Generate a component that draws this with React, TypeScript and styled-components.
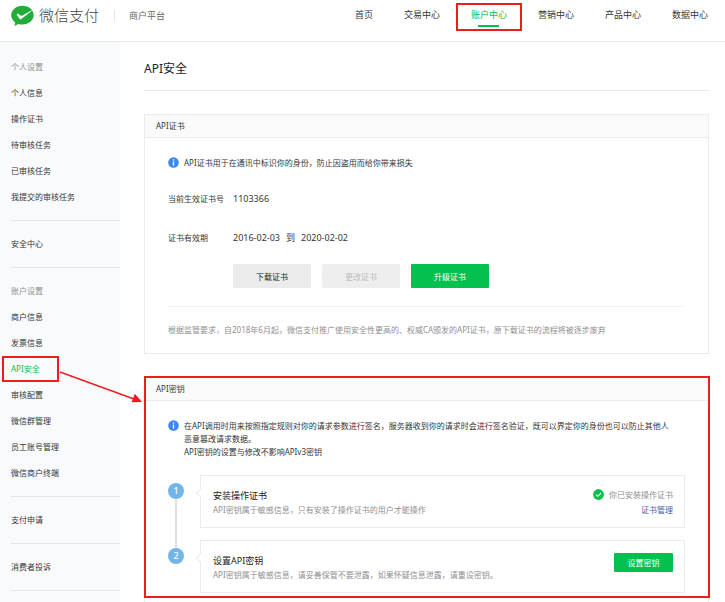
import React from 'react';
import styled, { createGlobalStyle, css } from 'styled-components';

const GlobalStyle = createGlobalStyle`
  *, *::before, *::after { box-sizing: border-box; }
  body {
    margin: 0;
    background: #fff;
    color: #353535;
    font-family: 'Noto Sans', 'Noto Sans CJK SC', sans-serif;
    font-size: 8px;
    line-height: 13px;
  }
  h1, h2, h3, p, ul, ol, dl, dd { margin: 0; padding: 0; font-weight: 400; }
  ul, ol { list-style: none; }
  a { color: inherit; text-decoration: none; }
  button { font: inherit; }
`;

const GREEN = '#04c04f';
const RED = '#ee1c1f';
const LINE = '#ebebeb';

const Page = styled.div`
  display: flex;
  flex-direction: column;
  min-height: 100vh;
`;

const Header = styled.header`
  display: flex;
  align-items: flex-start;
  height: 42px;
  padding: 0 16px 0 11px;
  border-bottom: 1px solid #e7e7eb;
`;

const Brand = styled.a`
  display: flex;
  align-items: center;
  gap: 5px;
  height: 31px;
  color: #444;
  font-size: 15px;
  font-weight: 300;
`;

const Platform = styled.span`
  height: 11px;
  margin: 10px 0 0 15px;
  padding-left: 14px;
  border-left: 1px solid #e4e4e4;
  color: #666;
  font-size: 9px;
  line-height: 11px;
`;

const Nav = styled.nav`
  display: flex;
  gap: 5px;
  margin-left: auto;
  margin-right: -12px;
  padding-top: 3px;
`;

const NavLink = styled.a<{ $active?: boolean }>`
  display: flex;
  flex-direction: column;
  align-items: center;
  height: 28px;
  padding: 3px 11px 0;
  border: 2px solid transparent;
  font-size: 9px;
  line-height: 13px;
  white-space: nowrap;
  ${({ $active }) =>
    $active &&
    css`
      margin: 0 -2px;
      padding: 3px 13px 0;
      border-color: ${RED};
      color: ${GREEN};
      &::after {
        content: '';
        width: 21px;
        height: 2px;
        margin-top: 4px;
        background: ${GREEN};
      }
    `}
`;

const Body = styled.div`
  display: flex;
  flex: 1;
`;

const Sidebar = styled.nav`
  flex: 0 0 120px;
  padding: 2px 0 0 11px;
  background: #f9fafc;
`;

const Group = styled.ul`
  padding: 10px 0;
  border-bottom: 1px solid #e4e6ea;
`;

const GroupTitle = styled.li`
  color: #8f8f8f;
  line-height: 26px;
`;

const SideItem = styled.li`
  position: relative;
  height: 26px;
  line-height: 26px;
`;

const CurrentLink = styled.a`
  color: ${GREEN};
  &::before {
    content: '';
    position: absolute;
    top: 0;
    left: -9px;
    width: 57px;
    height: 26px;
    border: 2px solid ${RED};
  }
`;

const Arrow = styled.svg`
  position: absolute;
  top: 14px;
  left: 48px;
  z-index: 1;
  pointer-events: none;
`;

const Main = styled.main`
  display: flex;
  flex: 1;
  flex-direction: column;
  gap: 23px;
  min-width: 0;
  padding: 0 16px 0 24px;
`;

const PageTitle = styled.h1`
  padding: 18px 0 12px;
  border-bottom: 1px solid ${LINE};
  color: #222;
  font-size: 12px;
  line-height: 18px;
`;

const Card = styled.section<{ $open?: boolean }>`
  position: relative;
  border: 1px solid ${LINE};
  ${({ $open }) => $open && 'flex: 1; border-bottom: 0;'}
`;

const CardTitle = styled.h2`
  padding: 0 11px;
  border-bottom: 1px solid ${LINE};
  background: #fafafa;
  font-size: 8px;
  line-height: 22px;
`;

const CardBody = styled.div<{ $bottom: number }>`
  padding: 18px 23px ${({ $bottom }) => $bottom}px;
`;

const Highlight = styled.div`
  position: absolute;
  inset: -2px -2px 4px -1px;
  border: 2px solid ${RED};
  pointer-events: none;
`;

const Notice = styled.div`
  display: flex;
  align-items: flex-start;
  gap: 5px;
  svg { flex: none; margin-top: 1px; }
`;

const Fields = styled.dl`
  display: grid;
  grid-template-columns: 65px 1fr;
  row-gap: 26px;
  margin: 23px 0 20px;
  dd { display: flex; gap: 6px; font-size: 9px; }
`;

const Actions = styled.div`
  display: flex;
  gap: 11px;
  padding-left: 65px;
`;

const Button = styled.button<{ $primary?: boolean; $small?: boolean }>`
  width: ${({ $small }) => ($small ? 59 : 78)}px;
  height: ${({ $small }) => ($small ? 19 : 24)}px;
  padding: 0;
  border: 0;
  border-radius: 1px;
  background: ${({ $primary }) => ($primary ? GREEN : '#ececec')};
  color: ${({ $primary }) => ($primary ? '#fff' : '#222')};
  cursor: pointer;
  &:disabled { color: #bcbcbc; background: #eee; cursor: default; }
`;

const Footnote = styled.p`
  margin-top: 18px;
  padding-top: 16px;
  border-top: 1px solid #f2f2f2;
  color: #8f8f8f;
`;

const Steps = styled.ol`
  display: flex;
  flex-direction: column;
  gap: 12px;
  margin-top: 17px;
`;

const Step = styled.li`
  display: flex;
  gap: 16px;
`;

const Marker = styled.div`
  display: flex;
  flex-direction: column;
  align-items: center;
  width: 16px;
  padding-top: 8px;
  ${Step}:not(:last-child) &::after {
    content: '';
    flex: 1;
    width: 2px;
    margin-bottom: -20px;
    background: #e0e0e8;
  }
`;

const Dot = styled.span`
  width: 16px;
  height: 16px;
  border-radius: 50%;
  background: #72b5e6;
  color: #fff;
  font-size: 9px;
  font-weight: 500;
  line-height: 16px;
  text-align: center;
`;

const StepBox = styled.div`
  position: relative;
  display: flex;
  flex: 1;
  justify-content: space-between;
  height: 53px;
  padding: 12px 11px 0 12px;
  border: 1px solid ${LINE};
  color: #8f8f8f;
  &::before {
    content: '';
    position: absolute;
    top: 14px;
    left: -4px;
    width: 6px;
    height: 6px;
    border: solid ${LINE};
    border-width: 0 0 1px 1px;
    background: #fff;
    transform: rotate(45deg);
  }
`;

const StepTitle = styled.h3`
  color: #222;
  font-size: 9px;
  line-height: 15px;
`;

const Status = styled.div`
  display: flex;
  flex-direction: column;
  align-items: flex-end;
  gap: 2px;
  a { color: #3f5fa8; }
`;

const Installed = styled.span`
  display: flex;
  align-items: center;
  gap: 5px;
`;

const InfoIcon = () => (
  <svg width="11" height="11" viewBox="0 0 11 11" aria-hidden="true">
    <circle cx="5.5" cy="5.5" r="5.3" fill="#3b87f7" />
    <circle cx="5.5" cy="3" r="0.8" fill="#fff" />
    <path d="M5.5 4.6v4" stroke="#fff" strokeWidth="1.3" />
  </svg>
);

const CheckIcon = () => (
  <svg width="11" height="11" viewBox="0 0 11 11" aria-hidden="true">
    <circle cx="5.5" cy="5.5" r="5.4" fill={GREEN} />
    <path d="M3 5.6l1.8 1.7L8.1 4" fill="none" stroke="#fff" strokeWidth="1.1" />
  </svg>
);

const PayLogo = () => (
  <svg width="23" height="22" viewBox="0 0 23 22" aria-hidden="true">
    <path
      d="M11.5.8C5.3.8.2 5 .2 10.2c0 2.900 1.600 5.500 4.100 7.200l-.9 3.600 4-2.100c1.300.4 2.700.6 4.100.6 6.200 0 11.200-4.200 11.200-9.400S17.700.8 11.500.8z"
      fill="#22ac38"
    />
    <path
      d="M5.900 9.200c.4-.6 1-.6 1.600-.2l2.400 1.700c.4.2.8.2 1.200 0l9.200-5.300c.4-.2.7.2.3.6L10.300 14c-.5.4-1.300.3-1.700-.3L6 10.300c-.3-.4-.4-.8-.1-1.100z"
      fill="#fff"
    />
  </svg>
);

const navItems = ['首页', '交易中心', '账户中心', '营销中心', '产品中心', '数据中心'];

const groups: { title?: string; items: string[] }[] = [
  { title: '个人设置', items: ['个人信息', '操作证书', '待审核任务', '已审核任务', '我提交的审核任务'] },
  { items: ['安全中心'] },
  {
    title: '账户设置',
    items: ['商户信息', '发票信息', 'API安全', '审核配置', '微信群管理', '员工账号管理', '微信商户终端'],
  },
  { items: ['支付申请'] },
  { items: ['消费者投诉'] },
];

export default function App() {
  return (
    <Page lang="zh-CN">
      <GlobalStyle />
      <Header>
        <Brand href="#">
          <PayLogo />
          微信支付
        </Brand>
        <Platform>商户平台</Platform>
        <Nav>
          {navItems.map((name) => (
            <NavLink key={name} href="#" $active={name === '账户中心'}>
              {name}
            </NavLink>
          ))}
        </Nav>
      </Header>
      <Body>
        <Sidebar>
          {groups.map((group) => (
            <Group key={group.items[0]}>
              {group.title && <GroupTitle>{group.title}</GroupTitle>}
              {group.items.map((item) => (
                <SideItem key={item}>
                  {item === 'API安全' ? (
                    <>
                      <CurrentLink href="#" aria-current="page">
                        {item}
                      </CurrentLink>
                      <Arrow width="86" height="36" viewBox="0 0 86 36" aria-hidden="true">
                        <path d="M1 2l74 27" stroke={RED} strokeWidth="1.4" />
                        <path d="M83 32l-10.5.3 3.3-8.600z" fill={RED} />
                      </Arrow>
                    </>
                  ) : (
                    <a href="#">{item}</a>
                  )}
                </SideItem>
              ))}
            </Group>
          ))}
        </Sidebar>
        <Main>
          <PageTitle>API安全</PageTitle>
          <Card>
            <CardTitle>API证书</CardTitle>
            <CardBody $bottom={17}>
              <Notice>
                <InfoIcon />
                <p>API证书用于在通讯中标识你的身份，防止因盗用而给你带来损失</p>
              </Notice>
              <Fields>
                <dt>当前生效证书号</dt>
                <dd>1103366</dd>
                <dt>证书有效期</dt>
                <dd>
                  <span>2016-02-03</span>
                  <span>到</span>
                  <span>2020-02-02</span>
                </dd>
              </Fields>
              <Actions>
                <Button type="button">下载证书</Button>
                <Button type="button" disabled>
                  更改证书
                </Button>
                <Button type="button" $primary>
                  升级证书
                </Button>
              </Actions>
              <Footnote>
                根据监管要求，自2018年6月起，微信支付推广使用安全性更高的、权威CA颁发的API证书，原下载证书的流程将被逐步废弃
              </Footnote>
            </CardBody>
          </Card>
          <Card $open>
            <CardTitle>API密钥</CardTitle>
            <CardBody $bottom={9}>
              <Notice>
                <InfoIcon />
                <div>
                  <p>
                    在API调用时用来按照指定规则对你的请求参数进行签名，服务器收到你的请求时会进行签名验证，既可以界定你的身份也可以防止其他人
                    <br />
                    恶意篡改请求数据。
                  </p>
                  <p>API密钥的设置与修改不影响APIv3密钥</p>
                </div>
              </Notice>
              <Steps>
                <Step>
                  <Marker>
                    <Dot>1</Dot>
                  </Marker>
                  <StepBox>
                    <div>
                      <StepTitle>安装操作证书</StepTitle>
                      <p>API密钥属于敏感信息，只有安装了操作证书的用户才能操作</p>
                    </div>
                    <Status>
                      <Installed>
                        <CheckIcon />
                        你已安装操作证书
                      </Installed>
                      <a href="#">证书管理</a>
                    </Status>
                  </StepBox>
                </Step>
                <Step>
                  <Marker>
                    <Dot>2</Dot>
                  </Marker>
                  <StepBox>
                    <div>
                      <StepTitle>设置API密钥</StepTitle>
                      <p>API密钥属于敏感信息，请妥善保管不要泄露，如果怀疑信息泄露，请重设密钥。</p>
                    </div>
                    <Button type="button" $primary $small>
                      设置密钥
                    </Button>
                  </StepBox>
                </Step>
              </Steps>
            </CardBody>
            <Highlight />
          </Card>
        </Main>
      </Body>
    </Page>
  );
}
